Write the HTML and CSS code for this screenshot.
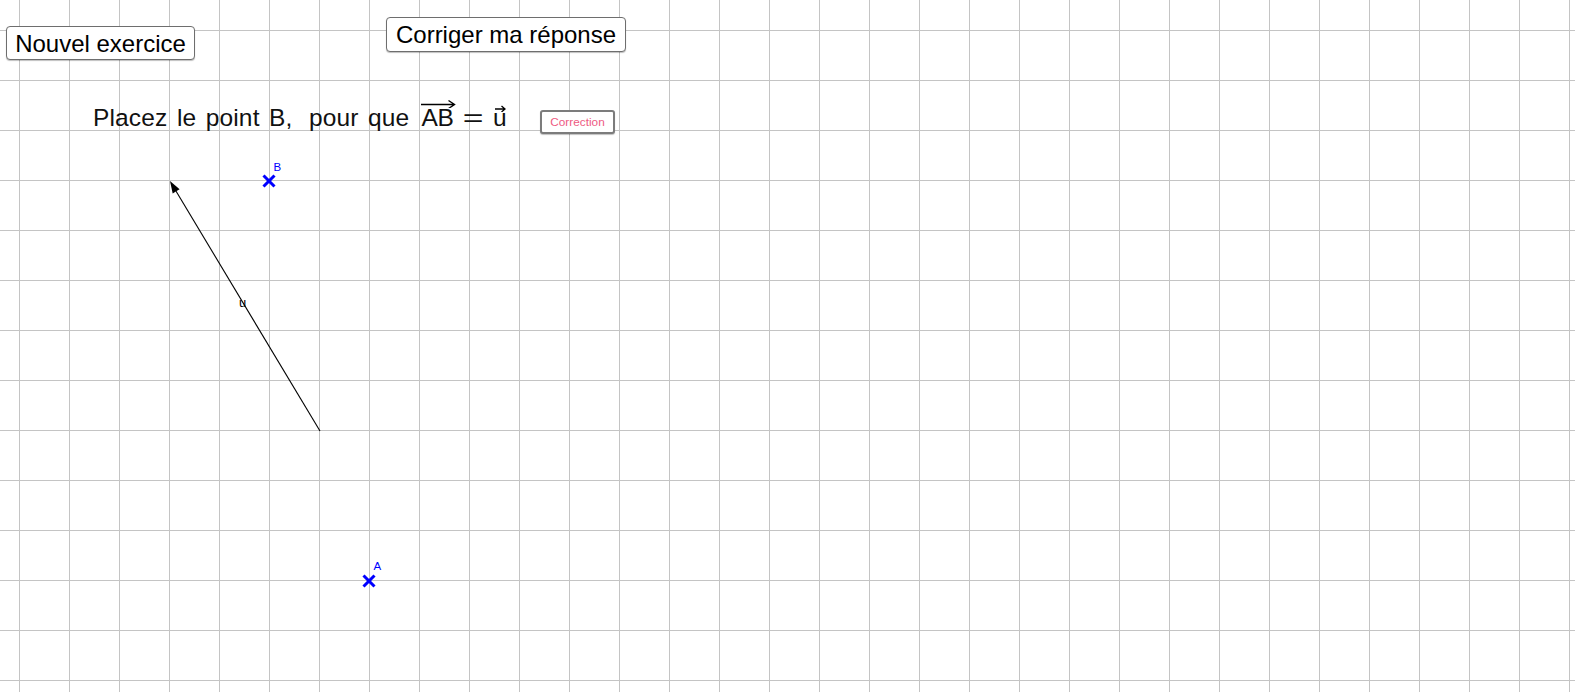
FILE: index.html
```html
<!DOCTYPE html>
<html lang="fr">
<head>
    <meta charset="UTF-8">
    <title>Placer un point avec un vecteur</title>
    <link rel="stylesheet" href="styles.css">
</head>
<body>
    <div class="board">
        <svg class="figure" width="1575" height="692" viewBox="0 0 1575 692">
            <!-- vecteur u -->
            <line x1="320" y1="431" x2="175.5" y2="190.3" stroke="#000" stroke-width="1.1"/>
            <polygon points="170,181 179.6,189.2 176.2,191.3 172.7,193.4" fill="#000"/>
            <text x="239" y="307" fill="#000" class="lbl lbl-u">u</text>
            <!-- point B -->
            <g stroke="#0000ff" stroke-width="3">
                <line x1="263.5" y1="175.5" x2="274.5" y2="186.5"/>
                <line x1="263.5" y1="186.5" x2="274.5" y2="175.5"/>
            </g>
            <text x="273.5" y="171" fill="#0000ff" class="lbl">B</text>
            <!-- point A -->
            <g stroke="#0000ff" stroke-width="3">
                <line x1="363.5" y1="575.5" x2="374.5" y2="586.5"/>
                <line x1="363.5" y1="586.5" x2="374.5" y2="575.5"/>
            </g>
            <text x="373.5" y="570" fill="#0000ff" class="lbl">A</text>
        </svg>

        <button class="btn btn-new">Nouvel exercice</button>
        <button class="btn btn-check">Corriger ma réponse</button>

        <p class="consigne">Placez le point B,<span class="gap"></span> pour que<span class="vec vec-ab">AB<svg viewBox="0 0 36 10" width="36" height="10"><path d="M1 6.5H34M28.5 2.5L34.5 6.5L28.5 10.5" fill="none" stroke="#000" stroke-width="1.4"/></svg></span><span class="eq">=</span><span class="vec vec-u">u<svg viewBox="0 0 12 8" width="12" height="8"><path d="M1 5H10.5M7.5 2L11 5L7.5 8" fill="none" stroke="#000" stroke-width="1.3"/></svg></span></p>

        <button class="btn btn-correction">Correction</button>
    </div>
</body>
</html>
```

FILE: styles.css
```css
*{padding: 0;margin: 0;box-sizing: border-box;}
body{background: #fff;font-family: "Liberation Sans", Arial, sans-serif;}

.board{
    position: relative;
    width: 1575px;
    height: 692px;
    overflow: hidden;
    background-color: #fff;
    background-image:
        linear-gradient(to right, #c4c4c4 1px, transparent 1px),
        linear-gradient(to bottom, #c4c4c4 1px, transparent 1px);
    background-size: 50px 50px;
    background-position: 19px 30px;
}
.figure{position: absolute;left: 0;top: 0;}
.lbl{font-family: "Liberation Sans", Arial, sans-serif;font-size: 11.5px;}
.lbl-u{font-size: 13px;}

/* boutons posés sur la feuille */
.btn{
    position: absolute;
    display: flex;
    align-items: center;
    justify-content: center;
    background: #fff;
    border: 1.5px solid #6e6e6e;
    border-radius: 4px;
    box-shadow: 0 1px 1px rgba(0,0,0,.25);
    font-family: "Liberation Sans", Arial, sans-serif;
    font-size: 24px;
    color: #000;
    line-height: 1;
}
.btn-new{left: 6px;top: 26px;width: 189px;height: 34px;padding-top: 1px;}
.btn-check{left: 386px;top: 17px;width: 240px;height: 35px;padding-top: 1px;}
.btn-correction{
    left: 540px;top: 110px;width: 75px;height: 24px;
    font-size: 11.8px;color: #ee5a82;
    border: 2px solid #7c7c7c;border-radius: 3px;
    padding-top: 1px;
}

/* consigne */
.consigne{
    position: absolute;
    left: 93px;
    top: 103px;
    font-size: 24.5px;
    line-height: 30px;
    word-spacing: 2.5px;
    letter-spacing: 0.15px;
    color: #111;
    white-space: nowrap;
}
.gap{display: inline-block;width: 7px;}
.vec{position: relative;display: inline-block;word-spacing: 0;letter-spacing: 0;}
.vec svg{position: absolute;display: block;}
.vec-ab{margin-left: 12px;letter-spacing: -0.3px;}
.vec-ab svg{left: -1px;top: -5px;}
.eq{display: inline-block;margin: 0 13px 0 12px;transform: scaleX(1.45);}
.vec-u svg{left: 1px;top: 1px;}
```
